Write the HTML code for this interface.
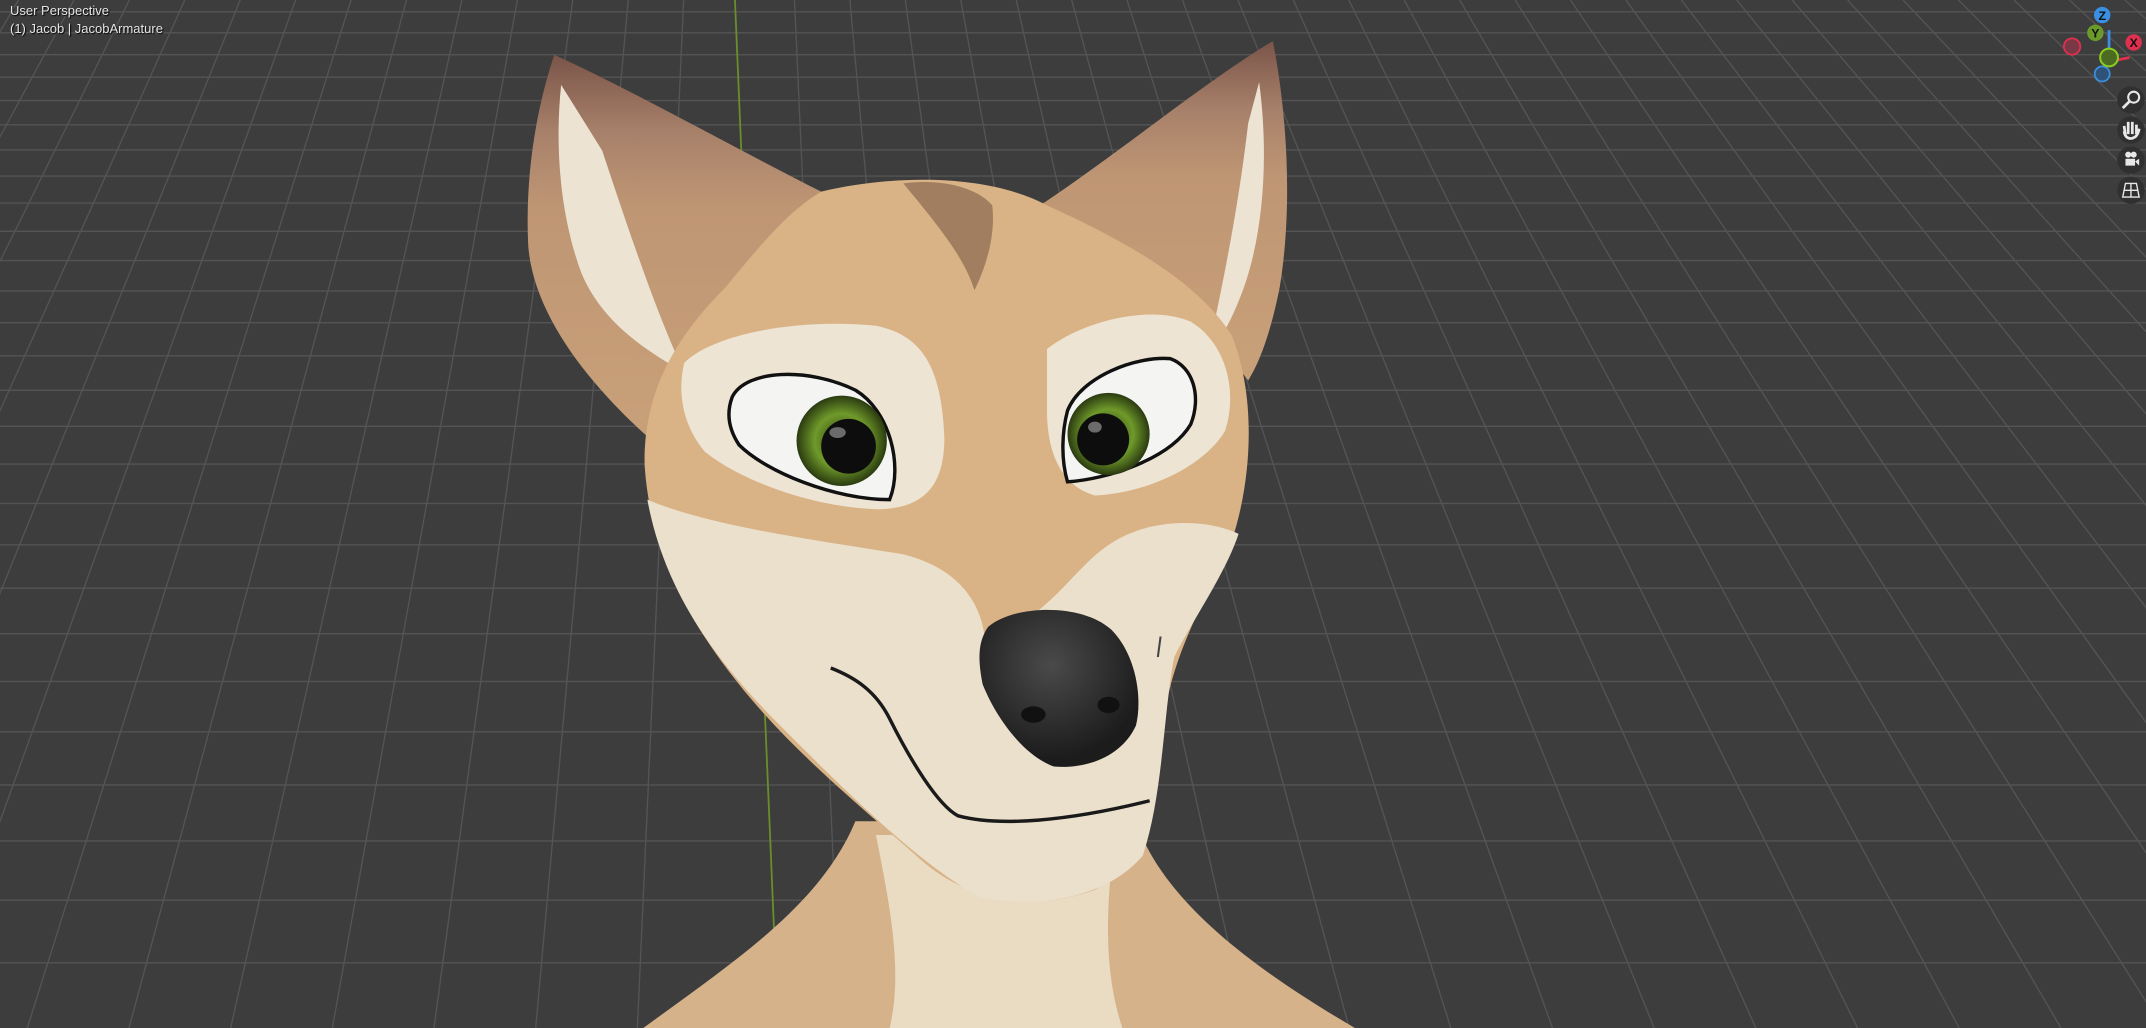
<!DOCTYPE html>
<html><head><meta charset="utf-8"><style>
html,body{margin:0;padding:0;background:#3d3d3d;overflow:hidden}
#w{position:relative;width:2146px;height:1028px}
svg{position:absolute;left:0;top:0}
.t{position:absolute;left:10px;color:#e6e6e6;font:13px "Liberation Sans",sans-serif;text-shadow:1px 1px 1px #000}
</style></head><body><div id="w">
<svg id="s" width="2146" height="1028" viewBox="0 0 1568 751" preserveAspectRatio="none">
<defs>
<radialGradient id="iris" cx="50%" cy="50%" r="50%"><stop offset="0" stop-color="#2f3a10"/><stop offset=".6" stop-color="#6f9a2a"/><stop offset="1" stop-color="#2a3a10"/></radialGradient>
<radialGradient id="nose" cx="45%" cy="35%" r="60%"><stop offset="0" stop-color="#4a4a4a"/><stop offset="1" stop-color="#1c1c1c"/></radialGradient>
<linearGradient id="ear" x1="0" y1="0" x2="0" y2="1"><stop offset="0" stop-color="#7a5448"/><stop offset=".2" stop-color="#a7806a"/><stop offset=".4" stop-color="#bf9674"/><stop offset="1" stop-color="#c8a078"/></linearGradient>
</defs>
<rect width="1568" height="751" fill="#3d3d3d"/>
<g id="grid" stroke="#545454" stroke-width="1"></g>
<line x1="537" y1="0" x2="566" y2="690" stroke="#6a8f2a" stroke-width="1.3"/>
<path d="M470 751 C540 700 600 660 625 600 L830 600 C850 660 920 710 990 751 Z" fill="#d6b28a"/>
<path d="M640 610 L815 610 C805 680 810 720 820 751 L650 751 C660 710 650 660 640 610Z" fill="#e9dcc3"/>
<path d="M405 40 C395 70 383 120 386 180 C390 230 430 280 472 318 L520 250 L600 140 C540 110 470 70 405 40Z" fill="url(#ear)"/>
<path d="M410 62 C405 110 410 160 425 200 C440 235 470 255 500 272 C480 230 460 170 440 110 Z" fill="#ece3d2"/>
<path d="M930 30 C940 80 945 150 935 210 C928 245 920 265 912 278 L860 210 L760 150 C820 110 880 60 930 30Z" fill="url(#ear)"/>
<path d="M920 60 C928 120 922 180 905 220 C897 240 890 250 883 256 C895 200 905 150 912 90Z" fill="#ece3d2"/>
<path d="M600 140 C650 128 720 126 765 150 C820 175 875 205 900 245 C918 290 915 350 900 395 C880 440 855 480 850 530 C848 580 835 630 800 650 C760 665 710 660 675 630 C630 590 580 550 540 500 C500 450 475 400 471 340 C470 290 490 250 530 210 C555 180 575 155 600 140Z" fill="#d9b386"/>
<path d="M660 134 C690 130 715 138 725 150 C728 175 718 200 712 212 C705 190 690 170 660 134Z" fill="#a07e5f"/>
<path d="M473 365 C520 385 600 395 660 405 C700 415 718 440 720 470 L760 445 C790 420 800 395 840 385 C870 378 895 385 905 390 C895 420 870 455 858 480 C850 520 850 580 835 625 C810 655 760 665 715 655 C670 630 620 580 570 530 C520 480 485 430 473 365Z" fill="#ebe0cc"/>
<path d="M500 265 C520 245 580 232 640 238 C675 245 688 270 690 320 C690 355 675 372 640 372 C590 370 540 350 515 330 C498 310 495 285 500 265Z" fill="#ede4d3"/>
<path d="M765 255 C790 235 840 222 870 235 C895 250 905 285 895 315 C880 340 840 360 800 362 C775 355 765 330 765 300Z" fill="#ede4d3"/>
<path d="M535 290 C545 270 590 268 625 285 C650 300 660 340 650 365 C610 365 560 345 540 325 C530 310 532 298 535 290Z" fill="#f4f4f2" stroke="#111" stroke-width="2.5"/>
<circle cx="615" cy="322" r="33" fill="url(#iris)"/>
<circle cx="620" cy="326" r="20" fill="#0d0d0d"/>
<ellipse cx="612" cy="316" rx="6" ry="4" fill="#aaa" opacity=".6"/>
<path d="M780 300 C790 275 830 260 855 262 C872 268 878 290 870 310 C855 335 810 350 780 352 C775 335 776 315 780 300Z" fill="#f4f4f2" stroke="#111" stroke-width="2.5"/>
<circle cx="810" cy="317" r="30" fill="url(#iris)"/>
<circle cx="806" cy="321" r="19" fill="#0d0d0d"/>
<ellipse cx="800" cy="312" rx="5" ry="4" fill="#aaa" opacity=".6"/>
<path d="M722 458 C740 442 790 440 812 460 C830 478 835 510 830 530 C820 552 795 562 770 560 C748 552 728 525 718 500 C714 480 715 468 722 458Z" fill="url(#nose)"/>
<ellipse cx="755" cy="522" rx="9" ry="6" fill="#111"/>
<ellipse cx="810" cy="515" rx="8" ry="6" fill="#111"/>
<path d="M607 488 C625 495 640 505 650 525 C665 555 685 588 700 596 C730 604 780 600 840 585" fill="none" stroke="#1a1a1a" stroke-width="2.5"/>
<path d="M848 465 L846 480" stroke="#444" stroke-width="1.5"/>
<line x1="1541" y1="22" x2="1541" y2="45" stroke="#3b8fe0" stroke-width="2"/>
<line x1="1541" y1="45" x2="1556" y2="42" stroke="#e03050" stroke-width="2"/>
<circle cx="1514" cy="34" r="6" fill="#7a3844" stroke="#e03050" stroke-width="1.3"/>
<circle cx="1536" cy="54" r="5.5" fill="#2f5378" stroke="#3b8fe0" stroke-width="1.3"/>
<circle cx="1541" cy="42" r="6.5" fill="#4d6a22" stroke="#8acb22" stroke-width="1.5"/>
<circle cx="1531" cy="24" r="6" fill="#6a9a2a"/>
<text x="1531" y="27.5" font-size="9" text-anchor="middle" fill="#111" font-family="Liberation Sans" font-weight="bold">Y</text>
<circle cx="1536" cy="11" r="6" fill="#3b8fe0"/>
<text x="1536" y="14.5" font-size="9" text-anchor="middle" fill="#111" font-family="Liberation Sans" font-weight="bold">Z</text>
<circle cx="1559" cy="31" r="6" fill="#e03050"/>
<text x="1559" y="34.5" font-size="9" text-anchor="middle" fill="#111" font-family="Liberation Sans" font-weight="bold">X</text>
<g fill="#303030"><circle cx="1557" cy="73" r="10"/><circle cx="1557" cy="95" r="10"/><circle cx="1557" cy="117" r="10"/><circle cx="1557" cy="139" r="10"/></g>
<g fill="#e8e8e8" stroke="#e8e8e8">
<circle cx="1559" cy="71" r="4" fill="none" stroke-width="1.5"/><line x1="1556" y1="74" x2="1551" y2="79" stroke-width="2"/>
<path d="M1553 99 L1552 92 M1555 98 L1555 89 M1558 98 L1558 89 M1561 98 L1561 91" stroke-width="2"/><path d="M1552 96 Q1553 102 1558 101 Q1562 100 1563 94" stroke-width="2" fill="none"/>
<rect x="1553" y="116" width="7" height="5" stroke="none"/><circle cx="1555" cy="113" r="2.2" stroke="none"/><circle cx="1559" cy="113" r="2.2" stroke="none"/><path d="M1560 118 L1563 116 L1563 121Z" stroke="none"/>
<path d="M1553 134 L1561 134 L1563 144 L1551 144Z M1557 134 L1557 144 M1552 139 L1562 139" fill="none" stroke-width="1"/>
</g>
</svg>
<div class="t" style="top:3px">User Perspective</div>
<div class="t" style="top:21px">(1) Jacob | JacobArmature</div>
</div>
<script>
var g=document.getElementById('grid'),H=-900,C=54516,cx=540,a=0.045,ns='http://www.w3.org/2000/svg';
function L(x1,y1,x2,y2){var l=document.createElementNS(ns,'line');l.setAttribute('x1',x1);l.setAttribute('y1',y1);l.setAttribute('x2',x2);l.setAttribute('y2',y2);g.appendChild(l);}
for(var z=20;z<80;z++){var y=H+C/z;if(y<0||y>760)continue;L(0,y,1568,y);}
for(var i=-60;i<=60;i++){if(i==0)continue;var x0=cx+i*(0-H)*a,x1=cx+i*(751-H)*a;L(x0,0,x1,751);}
</script>
</body></html>
